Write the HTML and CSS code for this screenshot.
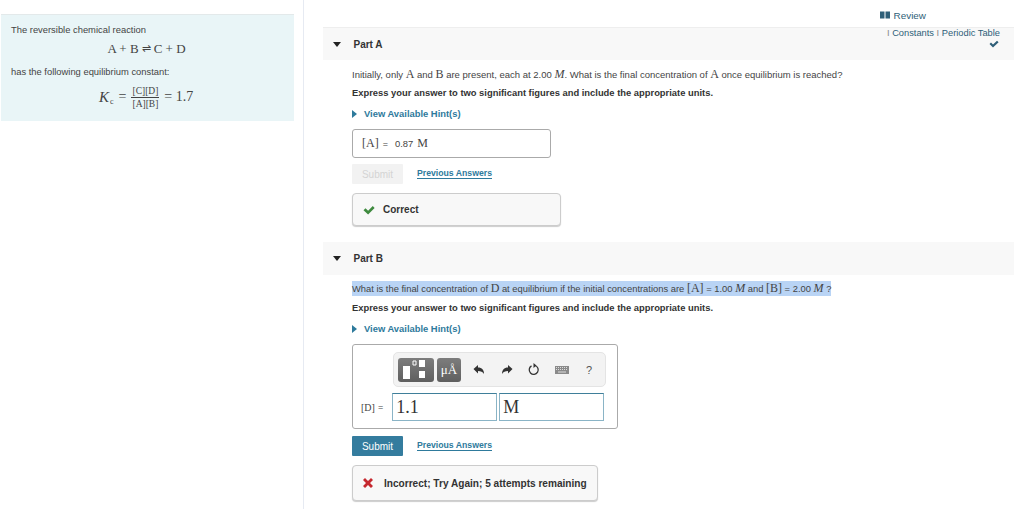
FILE: index.html
```html
<!DOCTYPE html>
<html lang="en">
<head>
<meta charset="utf-8">
<title>Equilibrium</title>
<link rel="stylesheet" href="styles.css">
</head>
<body>
<div class="page">
  <aside class="side">
    <div class="intro">
      <p class="intro-text">The reversible chemical reaction</p>
      <p class="eq eq-1"><span>A + B</span><span class="harp">⇌</span><span>C + D</span></p>
      <p class="intro-text">has the following equilibrium constant:</p>
      <div class="eq eq-2">
        <span class="kc"><i>K</i><sub>c</sub></span><span class="rel">=</span>
        <span class="frac"><span class="num">[C][D]</span><span class="den">[A][B]</span></span>
        <span class="rel">= 1.7</span>
      </div>
    </div>
  </aside>
  <main class="main">
    <div class="tools">
      <div class="review">
        <svg class="book" viewBox="0 0 10 8" width="10" height="8"><path d="M0 0.5h4.500v7H0zM5.500 0.5H10v7H5.500z" fill="#2f5f78"/></svg>
        <span>Review</span>
      </div>
    </div>
    <section class="part-head head-a">
      <svg class="caret" viewBox="0 0 8 5" width="8" height="5"><path d="M0 0h8L4 5z" fill="#222"/></svg>
      <span class="part-title">Part A</span>
      <div class="links">
        <div><span class="bar">I</span> Constants <span class="bar">I</span> Periodic Table</div>
        <svg class="done" viewBox="0 0 10 8" width="10" height="8"><path d="M0.500 4l1.500-1.500 2 2L8 0.700 9.600 2.200 4 7.600z" fill="#2f5f78"/></svg>
      </div>
    </section>
    <section class="body body-a">
      <p class="q">Initially, only <span class="m">A</span> and <span class="m">B</span> are present, each at 2.00 <i class="m">M</i>. What is the final concentration of <span class="m">A</span> once equilibrium is reached?</p>
      <p class="ask">Express your answer to two significant figures and include the appropriate units.</p>
      <p class="hint"><svg viewBox="0 0 5 8" width="5" height="8"><path d="M0 0l5 4-5 4z" fill="#2e7a9c"/></svg><span>View Available Hint(s)</span></p>
      <div class="answer-a"><span class="m">[A]</span><span class="eqs">=</span><span class="val">0.87</span><span class="m">M</span></div>
      <div class="actions">
        <button class="btn btn-off" type="button">Submit</button>
        <a class="prev" href="#">Previous Answers</a>
      </div>
      <div class="fb fb-ok">
        <svg viewBox="0 0 12 10" width="12" height="10"><path d="M0.500 5.200l2-2 2.600 2.600L9.800 1l1.800 1.900L5.100 9.400z" fill="#3f8a3f"/></svg>
        <span>Correct</span>
      </div>
    </section>
    <section class="part-head head-b">
      <svg class="caret" viewBox="0 0 8 5" width="8" height="5"><path d="M0 0h8L4 5z" fill="#222"/></svg>
      <span class="part-title">Part B</span>
    </section>
    <section class="body body-b">
      <p class="q"><span class="sel">What is the final concentration of <span class="m">D</span> at equilibrium if the initial concentrations are <span class="m">[A]</span> = 1.00 <i class="m">M</i> and <span class="m">[B]</span> = 2.00 <i class="m">M</i> ?</span></p>
      <p class="ask">Express your answer to two significant figures and include the appropriate units.</p>
      <p class="hint"><svg viewBox="0 0 5 8" width="5" height="8"><path d="M0 0l5 4-5 4z" fill="#2e7a9c"/></svg><span>View Available Hint(s)</span></p>
      <div class="answer-b">
        <div class="toolbar">
          <div class="tb-btn tb-tpl">
            <svg viewBox="0 0 36 24" width="36" height="24"><path d="M5 8h7v13H5z M21 2h6v7h-6z M21 13h6v7h-6z" fill="#fff"/><path d="M15 3h3v4h-3z" fill="none" stroke="#fff" stroke-width="1"/></svg>
          </div>
          <div class="tb-btn tb-mu">μÅ</div>
          <svg class="tb-i tb-undo" viewBox="0 0 12 10" width="12" height="10"><path d="M0.500 4L5 0v2.500c4 0 6 2.500 6 6.500C9.500 6.800 8 6 5 6v2.500z" fill="#333"/></svg>
          <svg class="tb-i tb-redo" viewBox="0 0 12 10" width="12" height="10"><path d="M11.500 4L7 0v2.500C3 2.500 1 5 1 9c1.500-2.200 3-3 6-3v2.500z" fill="#333"/></svg>
          <svg class="tb-i tb-reset" viewBox="0 0 12 13" width="12" height="13"><path d="M7 2.500a4.500 4.500 0 1 1-3.500.4" fill="none" stroke="#333" stroke-width="1.300"/><path d="M5.500 0v5l3-2.500z" fill="#333"/></svg>
          <svg class="tb-i tb-kbd" viewBox="0 0 14 8" width="14" height="8"><rect width="14" height="8" fill="#8a8a8a"/><path d="M1 1.500h12M1 3.500h12" stroke="#ddd" stroke-dasharray="1 1"/><path d="M3 6h8" stroke="#ddd"/></svg>
          <span class="tb-q">?</span>
        </div>
        <div class="input-row">
          <span class="m lab">[D]</span><span class="eqs">=</span>
          <div class="inbox">1.1</div>
          <div class="inbox">M</div>
        </div>
      </div>
      <div class="actions actions-b">
        <button class="btn btn-on" type="button">Submit</button>
        <a class="prev" href="#">Previous Answers</a>
      </div>
      <div class="fb fb-no">
        <svg viewBox="0 0 10 10" width="10" height="10"><path d="M0 2l2-2 3 3 3-3 2 2-3 3 3 3-2 2-3-3-3 3-2-2 3-3z" fill="#c5282f"/></svg>
        <span>Incorrect; Try Again; 5 attempts remaining</span>
      </div>
    </section>
  </main>
</div>
</body>
</html>
```
FILE: styles.css
```css
* { box-sizing: border-box; }
html, body { margin: 0; height: 100%; }
body { background: #fff; color: #333; font-family: "Liberation Sans", Arial, sans-serif; font-size: 9.4px; overflow: hidden; }
p { margin: 0; }
.page { display: flex; width: 1024px; height: 509px; }
.side { width: 304px; flex: none; padding: 14px 9px 0 1px; border-right: 1px solid #e6eaf2; }
.intro { height: 107px; background: #e9f5f7; border-top: 1px solid #e3e9ea; padding: 9px 0 0 10px; }
.intro-text { font-size: 9.4px; line-height: 11px; color: #444; }
.eq { font-family: "Liberation Serif", serif; color: #444; display: flex; align-items: center; justify-content: center; }
.eq-1 { font-size: 13px; height: 15px; margin: 6px 0 10px; padding-right: 12px; gap: 3px; }
.harp { font-size: 11px; line-height: 11px; }
.eq-2 { font-size: 14px; height: 30px; margin-top: 5px; gap: 5px; justify-content: flex-start; margin-left: 88px; }
.kc sub { font-size: 8px; vertical-align: -2px; line-height: 0; margin-left: 1px; }
.kc i { font-size: 15px; }
.frac { display: flex; flex-direction: column; align-items: center; font-size: 9.5px; line-height: 12px; }
.num { border-bottom: 1px solid #444; padding: 0 1px; }
.main { flex: 1; min-width: 0; padding-left: 19px; padding-right: 10px; }
.tools { height: 27px; padding: 9px 88px 0 0; display: flex; justify-content: flex-end; }
.review { display: flex; align-items: center; gap: 4px; height: 12px; color: #2f5f78; font-size: 9.9px; }
.part-head { height: 33px; background: #f8f8f8; display: flex; align-items: center; position: relative; }
.head-a { border-top: 1px solid #eeeeee; }
.caret { margin-left: 10px; }
.part-title { margin-left: 12.5px; font-weight: bold; font-size: 10px; color: #333; }
.links { position: absolute; right: 14px; top: 0; text-align: right; color: #2f5f78; font-size: 9.3px; line-height: 10px; }
.bar { color: #888; }
.done { display: block; margin: 2px 1px 0 auto; }
.body { padding-left: 29px; }
.body-a { height: 182px; padding-top: 6px; }
.body-b { padding-top: 5px; }
.q { height: 16px; line-height: 16px; font-size: 9.4px; color: #444; white-space: nowrap; }
.body-a .q { font-size: 9.5px; }
.m { font-family: "Liberation Serif", serif; font-size: 12px; color: #444; }
.sel { background: #b9d4f5; padding: 2px 0; }
.ask { margin-top: 3px; height: 16px; line-height: 16px; font-weight: bold; font-size: 9.4px; color: #333; }
.body-b .ask { margin-top: 4px; }
.hint { margin-top: 6px; height: 13px; display: flex; align-items: center; gap: 7px; color: #2e7a9c; font-weight: bold; font-size: 9.4px; }
.answer-a { margin-top: 9px; width: 199px; height: 29px; border: 1px solid #aaa; border-radius: 3px; display: flex; align-items: center; padding-left: 9px; gap: 4px; }
.answer-a .m { font-size: 12px; }
.eqs { font-size: 9px; color: #444; margin: 0 3px 0 0; }
.val { font-size: 9.4px; color: #444; }
.actions { margin-top: 6px; height: 20px; display: flex; align-items: center; gap: 14px; }
.btn { width: 51px; height: 20px; border: 0; border-radius: 1px; font: 10px "Liberation Sans", Arial, sans-serif; padding: 0; }
.btn-off { background: #f2f2f2; color: #d4d4d4; }
.btn-on { background: #347c9e; color: #fff; }
.prev { color: #2e7a9c; font-weight: bold; font-size: 8.7px; text-decoration: none; border-bottom: 1px solid #2e7a9c; line-height: 9px; }
.fb { margin-top: 9px; height: 33px; border: 1px solid #ccc; border-radius: 4px; background: #f8f8f8; display: flex; align-items: center; font-weight: bold; font-size: 10px; color: #333; box-shadow: 0 1px 1px #ccc; }
.fb-ok { width: 209px; padding-left: 10px; gap: 8px; }
.fb-no { width: 246px; padding-left: 10px; gap: 11px; height: 36px; font-size: 10.1px; }
.answer-b { margin-top: 9px; width: 266px; height: 85px; border: 1px solid #aaa; border-radius: 3px; padding: 7px 0 0 40px; }
.toolbar { width: 213px; height: 35px; background: #f3f3f3; border: 1px solid #e4e4e4; border-radius: 5px; display: flex; align-items: center; padding-left: 4px; }
.tb-btn { height: 24px; border-radius: 3px; color: #fff; display: flex; align-items: center; justify-content: center; background: linear-gradient(#7d7d7d, #5f5f5f); }
.tb-tpl { width: 36px; margin-right: 3px; }
.tb-mu { width: 24px; font: 13px "Liberation Serif", serif; }
.tb-i { flex: none; }
.tb-undo { margin-left: 12px; }
.tb-redo { margin-left: 16px; }
.tb-reset { margin-left: 15px; }
.tb-kbd { margin-left: 15px; }
.tb-q { margin-left: 17px; color: #555; font-size: 11px; }
.input-row { display: flex; align-items: center; margin-top: 6px; margin-left: -32px; }
.lab { font-size: 10px; margin-right: 3px; }
.input-row .eqs { margin-right: 9px; }
.inbox { width: 105px; height: 28px; border: 1px solid #8ab4c6; border-top-color: #3f7f9a; background: #fff; font: 18px/26px "Liberation Serif", serif; color: #333; padding-left: 3px; }
.inbox + .inbox { margin-left: 2px; }
.actions-b { margin-top: 7px; }
```
